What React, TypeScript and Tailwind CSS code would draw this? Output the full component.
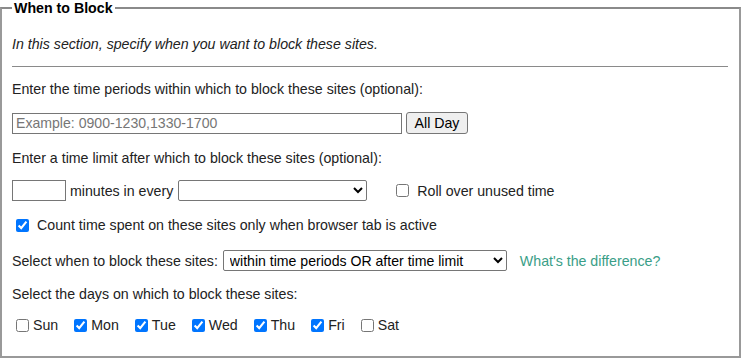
import React, { useState } from 'react';

const DAYS = [
  { name: 'Sun', checked: false },
  { name: 'Mon', checked: true },
  { name: 'Tue', checked: true },
  { name: 'Wed', checked: true },
  { name: 'Thu', checked: true },
  { name: 'Fri', checked: true },
  { name: 'Sat', checked: false },
];

const inputCls =
  'h-[21px] border border-[#767676] bg-white px-[3px] text-[14.1px] text-[#222] outline-none placeholder:text-[#767676]';
const selectCls =
  'h-[21px] border border-[#767676] rounded-[2px] bg-white pl-[2px] text-[14.1px] text-black appearance-auto';

// "When to Block" section
const App: React.FC = () => {
  const [days, setDays] = useState(DAYS);
  const [countActive, setCountActive] = useState(true);
  const [rollOver, setRollOver] = useState(false);

  return (
    <div className="w-[741px] h-[359px] bg-white text-[#222] text-[14.2px] leading-4" style={{ fontFamily: '"Liberation Sans", Arial, sans-serif' }}>
      <fieldset className="mx-0 border-2 border-[#999] border-t-[#8a8a8a] px-[10px] pb-[22px] h-[358px] min-w-0">
        <legend className="px-[2px] font-bold text-[14.2px] leading-4 text-black">When to Block</legend>

        <p className="mt-[20px] italic">In this section, specify when you want to block these sites.</p>

        <hr className="mt-[14px] border-t border-[#8a8a8a] mr-[1px]" />

        <p className="mt-[14px]">Enter the time periods within which to block these sites (optional):</p>

        <div className="mt-[15px] flex items-center h-[22px]">
          <input type="text" placeholder="Example: 0900-1230,1330-1700" className={`${inputCls} w-[390px]`} />
          <button className="ml-[4px] h-[22px] w-[62px] border border-[#767676] rounded-[3px] bg-[#efefef] text-[14.2px] text-black">
            All Day
          </button>
        </div>

        <p className="mt-[16px]">Enter a time limit after which to block these sites (optional):</p>

        <div className="mt-[14px] flex items-center h-[21px]">
          <input type="text" className={`${inputCls} w-[54px]`} />
          <span className="ml-[4px]">minutes in every</span>
          <select className={`${selectCls} ml-[5px] w-[189px]`} defaultValue="">
            <option value=""></option>
            <option value="60">hour</option>
            <option value="1440">day</option>
          </select>
          <label className="ml-[25px] flex items-center">
            <input type="checkbox" checked={rollOver} onChange={() => setRollOver(!rollOver)} className="m-[3px_3px_3px_4px] w-[13px] h-[13px] accent-[#0075ff]" />
            <span className="ml-[5px]">Roll over unused time</span>
          </label>
        </div>

        <label className="mt-[16px] flex items-center h-4">
          <input type="checkbox" checked={countActive} onChange={() => setCountActive(!countActive)} className="m-[3px_3px_3px_4px] w-[13px] h-[13px] accent-[#0075ff]" />
          <span className="ml-[5px]">Count time spent on these sites only when browser tab is active</span>
        </label>

        <div className="mt-[17px] flex items-center h-[21px]">
          <span>Select when to block these sites:</span>
          <select className={`${selectCls} ml-[5px] w-[284px]`} defaultValue="0">
            <option value="0">within time periods OR after time limit</option>
            <option value="1">within time periods AND after time limit</option>
          </select>
          <a href="#" className="ml-[13px] text-[#3a9e87]">What's the difference?</a>
        </div>

        <p className="mt-[15px]">Select the days on which to block these sites:</p>

        <div className="mt-[15px] flex items-center gap-[12px] h-4">
          {days.map((d, i) => (
            <label key={d.name} className="flex items-center">
              <input
                type="checkbox"
                checked={d.checked}
                onChange={() => setDays(days.map((x, j) => (j === i ? { ...x, checked: !x.checked } : x)))}
                className="m-[3px_3px_3px_4px] w-[13px] h-[13px] accent-[#0075ff]"
              />
              <span className="ml-[1px]">{d.name}</span>
            </label>
          ))}
        </div>
      </fieldset>
    </div>
  );
};

export default App;
